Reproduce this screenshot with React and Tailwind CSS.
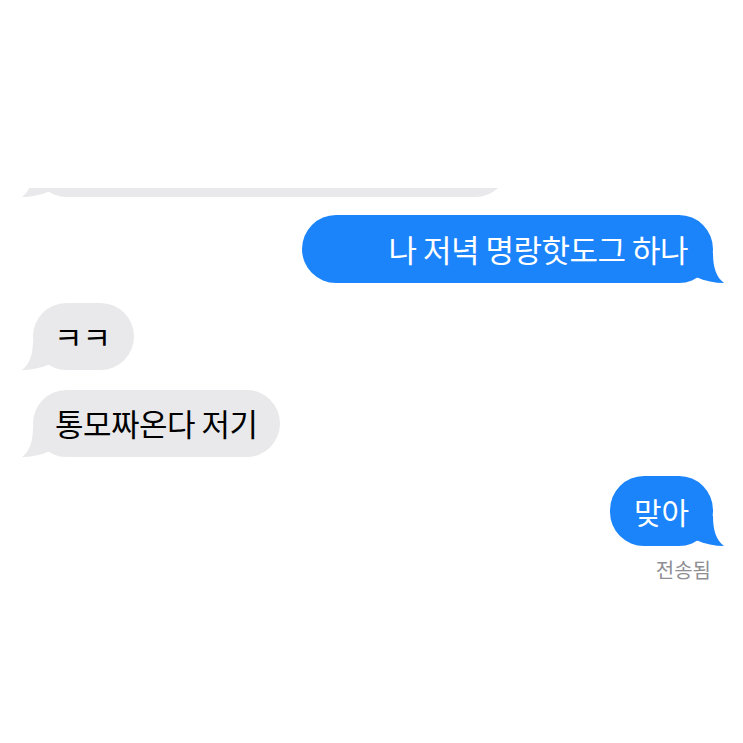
const font = { fontFamily: '"Noto Sans CJK KR", "Noto Sans", sans-serif' }

function Tail({ side, color }) {
  if (side === 'right') {
    return (
      <svg
        className="absolute right-[-11px] bottom-0 w-[28px] h-[30px]"
        viewBox="0 0 28 30"
      >
        <path d="M0 0 L17 0 C17 14 20 24 28 30 C19 30 9 28 0 24 Z" fill={color} />
      </svg>
    )
  }
  return (
    <svg
      className="absolute left-[-11px] bottom-0 w-[28px] h-[30px] -scale-x-100"
      viewBox="0 0 28 30"
    >
      <path d="M0 0 L17 0 C17 14 20 24 28 30 C19 30 9 28 0 24 Z" fill={color} />
    </svg>
  )
}

function Received({ children, className = '' }) {
  return (
    <div className={`relative self-start rounded-[34px] bg-[#e9e9eb] text-black ${className}`}>
      <Tail side="left" color="#e9e9eb" />
      <span className="relative">{children}</span>
    </div>
  )
}

function Sent({ children, className = '' }) {
  return (
    <div className={`relative self-end rounded-[34px] bg-[#1b84fa] text-white ${className}`}>
      <Tail side="right" color="#1b84fa" />
      <span className="relative">{children}</span>
    </div>
  )
}

export default function App() {
  return (
    <div className="w-[743px] h-[743px] bg-white overflow-hidden flex flex-col" style={font}>
      {/* previous message, scrolled almost out of view */}
      <div className="mt-[188px] h-[9px] overflow-hidden flex flex-col justify-end pl-[33px]">
        <Received className="w-[476px] h-[68px] shrink-0" />
      </div>

      <div className="flex flex-col pl-[33px] pr-[30px]">
        <Sent className="mt-[18px] w-[411px] h-[68px] flex items-center justify-end pr-[25px] text-[31px] tracking-[-0.5px]">
          나 저녁 명랑핫도그 하나
        </Sent>

        <Received className="mt-[20px] w-[101px] h-[67px] flex items-center pl-[21px] text-[31px]">
          ㅋㅋ
        </Received>

        <Received className="mt-[20px] w-[247px] h-[67px] flex items-center pl-[22px] text-[31px] tracking-[-0.5px]">
          통모짜온다 저기
        </Received>

        <Sent className="mt-[19px] w-[103px] h-[70px] flex items-center justify-center text-[30px]">
          맞아
        </Sent>

        <div className="self-end mt-[9px] pr-[2px] text-[20px] text-[#8e8e93]">전송됨</div>
      </div>
    </div>
  )
}
